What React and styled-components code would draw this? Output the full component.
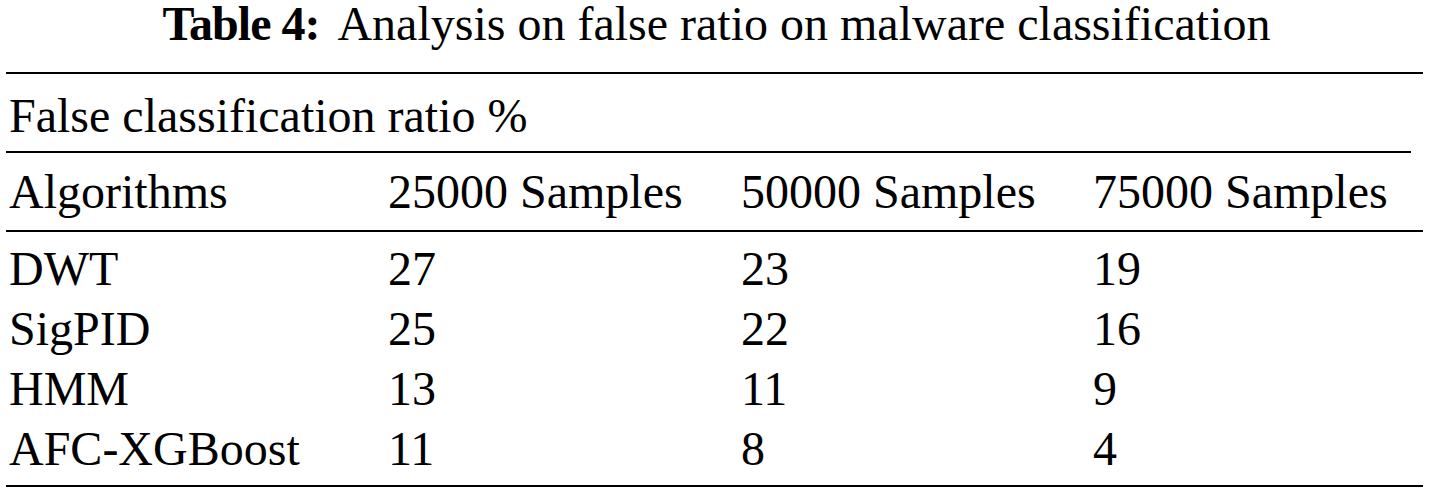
import React from "react";
import styled, { createGlobalStyle } from "styled-components";

const Global = createGlobalStyle`
  html, body { margin: 0; padding: 0; background: #fff; }
  body { font-family: "Liberation Serif", "Times New Roman", serif; color: #000; }
`;

const Page = styled.div`
  width: 1429px;
  height: 492px;
  background: #fff;
  overflow: hidden;
  font-family: "Liberation Serif", "Times New Roman", serif;
  padding-top: 6px;
  box-sizing: border-box;
`;

const Caption = styled.div`
  font-size: 48px;
  line-height: 36px;
  text-align: center;
  height: 36px;
  margin-bottom: 30px;
  padding-left: 4px;
`;

const Label = styled.span`
  font-weight: bold;
  letter-spacing: -1px;
  margin-right: 18px;
`;

const Table = styled.div`
  margin-left: 6px;
  width: 1417px;
  border-top: 2px solid #000;
  border-bottom: 2px solid #000;
  font-size: 48px;
  line-height: 60px;
`;

const Row = styled.div`
  display: grid;
  grid-template-columns: 379px 353px 352px 333px;
  padding-top: ${(p) => p.$top}px;
  padding-bottom: ${(p) => p.$bottom}px;
  margin-right: ${(p) => p.$trim || 0}px;
  border-bottom: ${(p) => (p.$rule ? "2px solid #000" : "none")};
`;

const Cell = styled.div`
  padding-left: 3px;
  white-space: nowrap;
  grid-column: ${(p) => p.$span || "auto"};
  height: 60px;
`;

const Body = styled.div`
  padding-top: 7px;
  padding-bottom: 6px;
`;

const data = [
  ["DWT", "27", "23", "19"],
  ["SigPID", "25", "22", "16"],
  ["HMM", "13", "11", "9"],
  ["AFC-XGBoost", "11", "8", "4"],
];

export default function App() {
  return (
    <Page>
      <Global />
      <Caption>
        <Label>Table 4:</Label>Analysis on false ratio on malware classification
      </Caption>
      <Table>
        <Row $top={12} $bottom={5} $trim={12} $rule>
          <Cell $span="1 / -1">False classification ratio %</Cell>
        </Row>
        <Row $top={9} $bottom={8} $rule>
          <Cell>Algorithms</Cell>
          <Cell>25000 Samples</Cell>
          <Cell>50000 Samples</Cell>
          <Cell>75000 Samples</Cell>
        </Row>
        <Body>
          {data.map((r) => (
            <Row key={r[0]} $top={0} $bottom={0}>
              {r.map((c, i) => (
                <Cell key={i}>{c}</Cell>
              ))}
            </Row>
          ))}
        </Body>
      </Table>
    </Page>
  );
}
